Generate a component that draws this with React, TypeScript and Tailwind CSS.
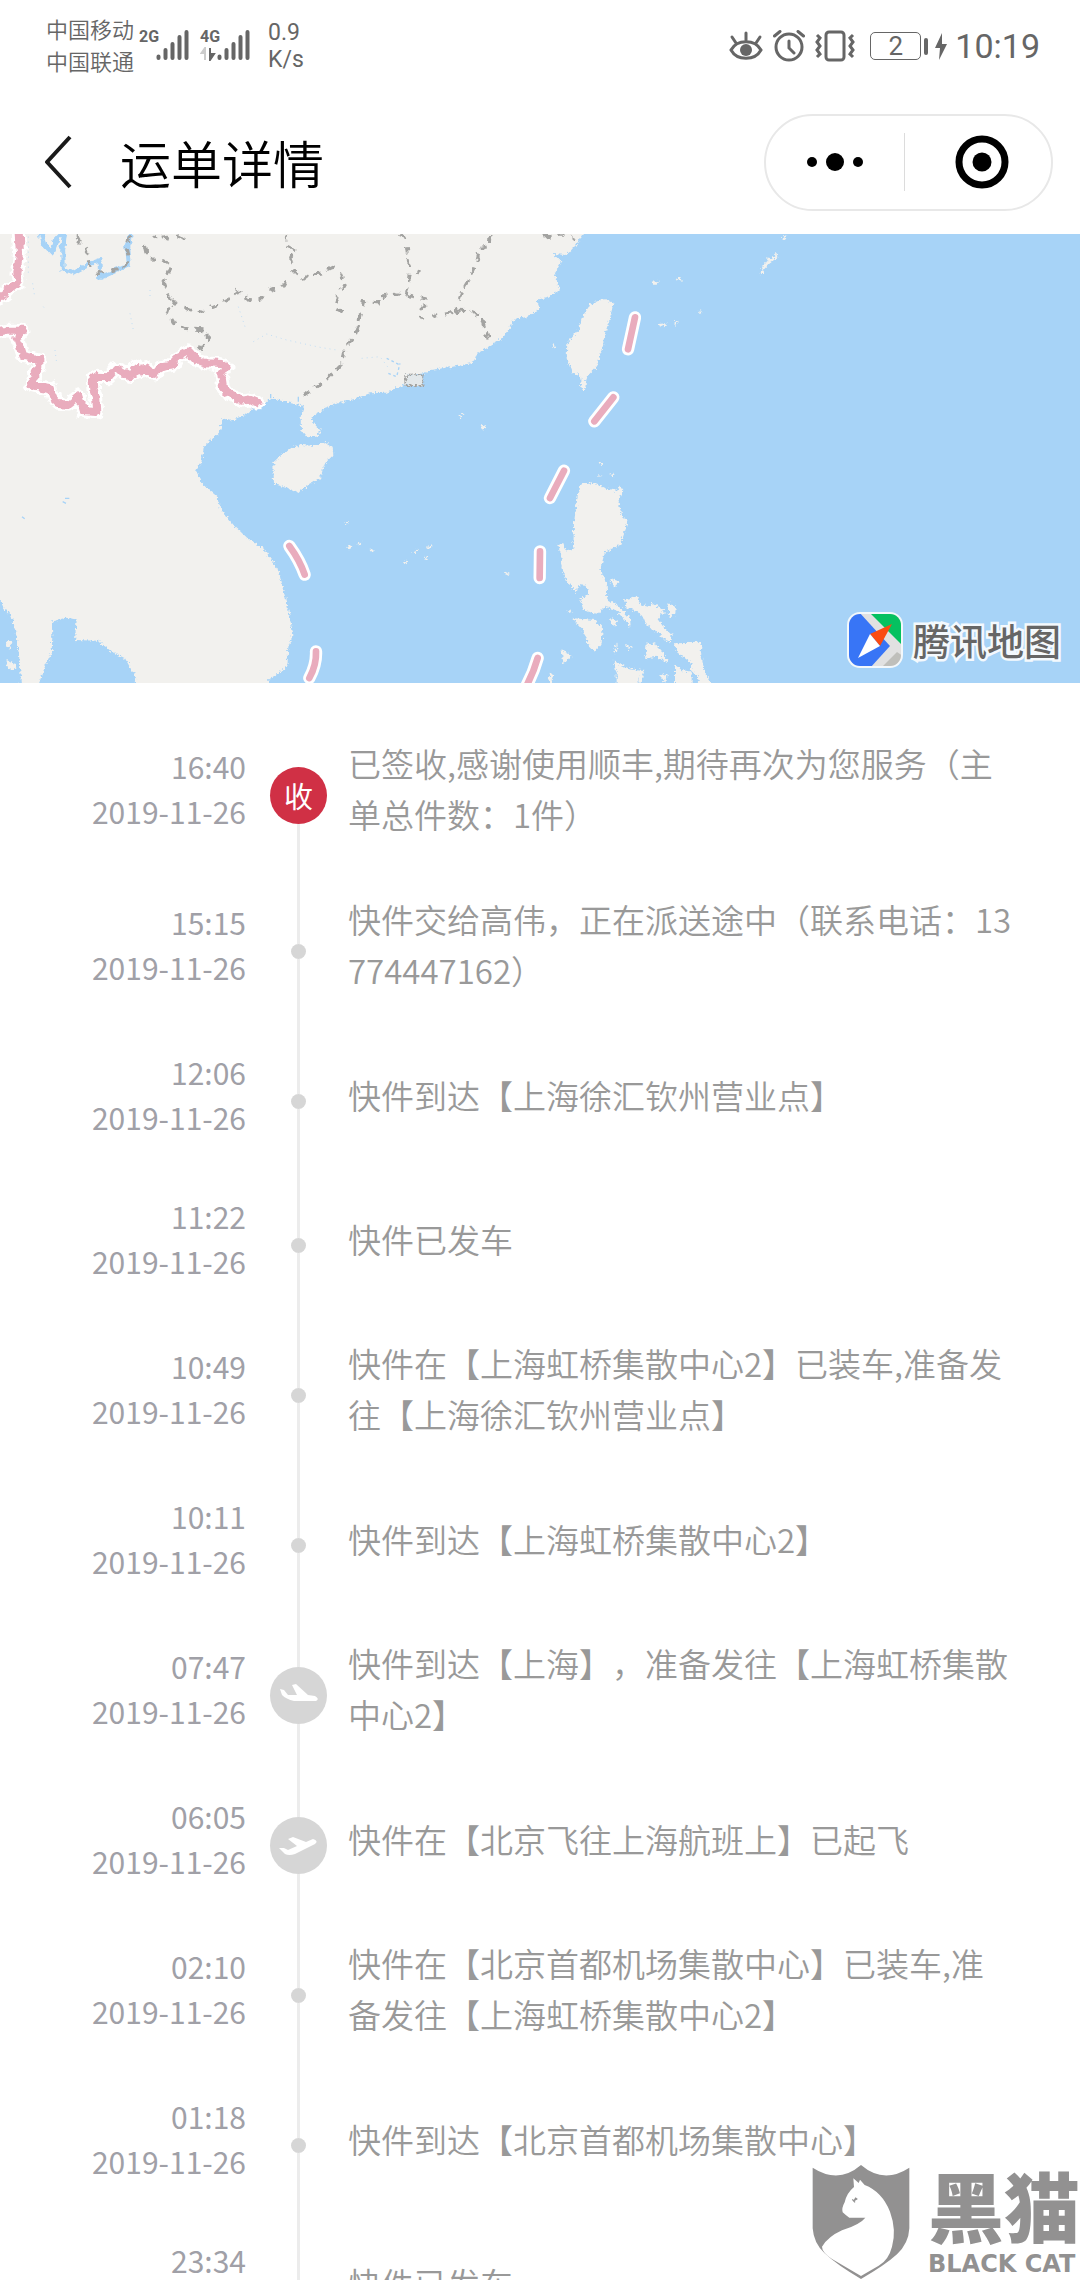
import { Fragment } from "react";

type Marker = "dot" | "signed" | "landing" | "takeoff";

interface TrackEvent {
  time: string;
  date: string;
  text: string;
  marker?: Marker;
}

const events: TrackEvent[] = [
  { time: "16:40", date: "2019-11-26", text: "已签收,感谢使用顺丰,期待再次为您服务（主单总件数：1件）", marker: "signed" },
  { time: "15:15", date: "2019-11-26", text: "快件交给高伟，正在派送途中（联系电话：13774447162）" },
  { time: "12:06", date: "2019-11-26", text: "快件到达【上海徐汇钦州营业点】" },
  { time: "11:22", date: "2019-11-26", text: "快件已发车" },
  { time: "10:49", date: "2019-11-26", text: "快件在【上海虹桥集散中心2】已装车,准备发往【上海徐汇钦州营业点】" },
  { time: "10:11", date: "2019-11-26", text: "快件到达【上海虹桥集散中心2】" },
  { time: "07:47", date: "2019-11-26", text: "快件到达【上海】，准备发往【上海虹桥集散中心2】", marker: "landing" },
  { time: "06:05", date: "2019-11-26", text: "快件在【北京飞往上海航班上】已起飞", marker: "takeoff" },
  { time: "02:10", date: "2019-11-26", text: "快件在【北京首都机场集散中心】已装车,准备发往【上海虹桥集散中心2】" },
  { time: "01:18", date: "2019-11-26", text: "快件到达【北京首都机场集散中心】" },
  { time: "23:34", date: "2019-11-25", text: "快件已发车" },
];

function SignalBars() {
  return (
    <svg width="34" height="32" viewBox="0 0 34 32" stroke="#666" strokeWidth="4" strokeLinecap="round">
      <path d="M2.5 27.5V29M9.5 21V29M16.5 15V29M23.5 8V29M30.5 3V29" />
    </svg>
  );
}

function StatusBar() {
  return (
    <div className="flex h-[92px] items-start justify-between pr-10 pl-[46px] text-[#666]">
      <div className="flex">
        <div className="pt-3 text-[22px] leading-[32px] font-[350]">
          <p>中国移动</p>
          <p>中国联通</p>
        </div>
        <div className="flex pt-[29px] pl-[5px] font-['Liberation_Sans_Narrow','Roboto',sans-serif] text-[16px] leading-[16px] font-bold">
          <span className="w-[17px]">2G</span>
          <SignalBars />
          <span className="ml-[10px] flex w-[17px] flex-col">
            4G
            <svg width="17" height="14" viewBox="0 0 17 14" className="mt-[2px]">
              <path d="M5 1v12M5 1L1.500 6H5z" fill="#ccc" stroke="#ccc" strokeWidth="2" />
              <path d="M10 1v12M10 13l4-6h-4z" fill="#666" stroke="#666" strokeWidth="2" />
            </svg>
          </span>
          <SignalBars />
        </div>
        <div className="pt-[19px] pl-[17px] font-['Roboto',sans-serif] text-[23px] leading-[27px]">
          <p>0.9</p>
          <p>K/s</p>
        </div>
      </div>

      <div className="flex h-[92px] items-center">
        <svg width="34" height="32" viewBox="0 0 34 32" fill="none" stroke="#666" strokeWidth="3" strokeLinecap="round">
          <path d="M2 20C8 9 26 9 32 20C26 31 8 31 2 20Z" />
          <path d="M17 3v7M3 7l4 6M31 7l-4 6" />
          <circle cx="17" cy="20" r="6" fill="#666" stroke="none" />
        </svg>
        <svg width="32" height="32" viewBox="0 0 32 32" fill="none" stroke="#666" strokeWidth="3" strokeLinecap="round" className="ml-[10px]">
          <circle cx="16" cy="17" r="13" />
          <path d="M16 11v7l5 5M1.500 6L7 1.500M30.500 6L25 1.500" />
        </svg>
        <svg width="40" height="32" viewBox="0 0 40 32" fill="none" stroke="#666" strokeWidth="3" className="ml-[10px]">
          <rect x="11" y="2" width="18" height="28" rx="3" />
          <path d="M2 5l3 3-3 4 3 4-3 4 3 4-3 3M38 5l-3 3 3 4-3 4 3 4-3 4 3 3" />
        </svg>
        <div className="ml-[15px] flex h-[28px] w-[51px] items-center justify-center rounded-[5px] border border-[#666] font-['Roboto',sans-serif] text-[26px] leading-none">
          2
        </div>
        <div className="ml-[3px] h-[17px] w-1 rounded-sm bg-[#666]" />
        <svg width="12" height="27" viewBox="0 0 12 27" fill="#666" className="ml-[7px]">
          <path d="M7 0L0 15h5L4 27l8-16H7z" />
        </svg>
        <span className="ml-[8px] font-['Roboto',sans-serif] text-[34px] leading-none">10:19</span>
      </div>
    </div>
  );
}

function NavBar() {
  return (
    <header className="flex h-[142px] items-center justify-between pr-[27px] pb-[2px] pl-[45px]">
      <div className="flex items-center">
        <button aria-label="返回" className="py-2 pr-[48px]">
          <svg width="27" height="54" viewBox="0 0 27 54" fill="none" stroke="#1a1a1a" strokeWidth="4">
            <path d="M25 2L2 27l23 25" strokeLinejoin="round" />
          </svg>
        </button>
        <h1 className="text-[51px] leading-[76px] font-[350] text-black">运单详情</h1>
      </div>
      <div className="flex h-[97px] w-[289px] items-center rounded-full border-2 border-[#e8e8e8]">
        <button aria-label="更多" className="flex flex-1 justify-center">
          <svg width="58" height="20" viewBox="0 0 58 20">
            <circle cx="6" cy="10" r="5" />
            <circle cx="29" cy="10" r="9" />
            <circle cx="52" cy="10" r="5" />
          </svg>
        </button>
        <div className="h-[58px] w-px bg-[#dcdcdc]" />
        <button aria-label="关闭" className="flex flex-1 justify-center pl-2">
          <svg width="54" height="54" viewBox="0 0 54 54">
            <circle cx="27" cy="27" r="23" fill="none" stroke="#000" strokeWidth="7" />
            <circle cx="27" cy="27" r="9.500" />
          </svg>
        </button>
      </div>
    </header>
  );
}

const landBorders = [
  "M-30 312L20 302L68 302L52 322L70 378L118 388L118 412L104 425L106 440L94 466L152 474L162 508L176 522L205 524L238 498L252 544L292 546L290 520L288 500L280 480L278 450L290 440L328 442L348 416L366 424L390 438L412 412L424 424L436 414L462 434L480 412L518 406L528 384L566 364L590 390L620 400L664 402L680 412L664 436L670 478L698 496L728 512L748 508L772 518",
  "M54 -20L60 70L52 130L56 156L18 186L-30 225",
];

const seaDashes = [
  "M868 948Q900 992 914 1034",
  "M948 1264Q950 1304 928 1344",
  "M1905 262L1884 358",
  "M1840 502L1783 574",
  "M1692 722L1650 804",
  "M1620 964L1619 1044",
  "M1613 1284Q1600 1330 1578 1370",
];

const provinceLines = [
  "M230 20L265 75L270 105L290 128L360 118L388 95L376 40L400 12",
  "M550 20L520 28L500 22L470 28L460 15",
  "M436 48L445 88L485 86L515 105L492 155L504 188L516 215L502 250L520 280L552 295L615 300L628 335L590 362",
  "M516 215L545 232L600 248L655 224L690 205L712 182L742 205L778 208L800 185L850 165L858 155",
  "M855 12L858 45L885 60L872 85L882 125L905 150L930 132L960 130L995 112L1020 125L1035 158L1012 200L1003 232L1045 254",
  "M1078 250L1078 280L1064 320L1036 350L1028 400L980 450L920 490L895 505",
  "M1080 270L1090 215L1130 218L1150 220L1150 198L1185 190L1215 196L1250 202L1285 208L1255 245L1265 268L1310 255L1350 250L1365 240L1410 242L1445 258L1457 300L1470 345",
  "M1200 12L1218 40L1224 90L1232 120L1226 160L1218 195",
  "M1258 120L1255 135",
  "M1470 12L1467 50L1440 55L1428 105L1408 145L1388 180L1375 215L1365 255",
  "M1630 18L1690 12L1725 30",
];

function PinkLine({ d, width }: { d: string; width: number }) {
  return (
    <Fragment>
      <path d={d} stroke="#fff" strokeWidth={width + 17} />
      <path d={d} stroke="#e9acbd" strokeWidth={width} />
    </Fragment>
  );
}

// drawn at three units to the pixel
function RouteMap() {
  return (
    <section className="relative bg-[#a7d3f7]">
      <svg viewBox="0 12 3240 1347" className="block w-full" role="img" aria-label="地图">
        <defs>
          <filter id="coast" x="-5%" y="-5%" width="110%" height="110%" colorInterpolationFilters="sRGB">
            <feTurbulence type="fractalNoise" baseFrequency="0.12" numOctaves="3" seed="4" />
            <feDisplacementMap in="SourceGraphic" scale="18" xChannelSelector="R" yChannelSelector="G" />
          </filter>
          <filter id="wobble" x="-5%" y="-5%" width="110%" height="110%" colorInterpolationFilters="sRGB">
            <feTurbulence type="fractalNoise" baseFrequency="0.05" numOctaves="2" seed="9" />
            <feDisplacementMap in="SourceGraphic" scale="22" xChannelSelector="R" yChannelSelector="G" />
          </filter>
        </defs>
        <g fill="#f2f1ee" filter="url(#coast)">
          <path d="M-60 -30H1760L1745 20L1725 48L1700 75L1660 72L1684 95L1665 130L1678 180L1640 205L1612 208L1618 236L1580 262L1545 266L1525 300L1500 330L1465 350L1430 372L1420 398L1350 412L1290 420L1280 430L1215 435L1240 445L1210 466L1160 488L1110 490L1060 508L985 528L960 545L940 556L935 572L962 602L950 620L920 622L903 600L902 560L912 528L870 518L815 505L790 520L760 535L735 555L690 572L668 565L660 605L612 650L603 700L588 722L610 765L652 800L660 835L705 890L740 922L790 955L836 1020L850 1080L865 1140L880 1215L865 1250L862 1310L805 1350V1420H425L400 1330L375 1285L335 1265L295 1232L225 1230L230 1168L200 1163L155 1175L157 1215L155 1270L130 1320L118 1358V1420H65L60 1300L50 1220L35 1160L10 1130L-20 1080H-60Z" />
          <path d="M820 700L865 658L905 645L945 648L975 635L998 650L1000 675L975 700L960 745L925 765L895 788L865 775L822 762Z" />
          <path d="M22 1228L36 1240L28 1256L18 1246ZM20 1290L40 1300L50 1315L34 1320L20 1312Z" />
          <g transform="translate(810)">
            <path d="M960 225L1000 205L1030 220L1020 265L1005 310L998 350L980 410L950 440L945 482L935 478L930 440L905 425L890 385L892 340L925 300L940 255Z" />
            <path d="M928 765L965 757L1005 775L1040 782L1050 766L1060 780L1045 810L1052 845L1072 880L1050 945L1005 965L990 1020L1010 1060L1012 1110L1050 1130L1080 1165L1082 1190L1060 1165L1035 1138L1005 1130L985 1152L940 1142L930 1110L955 1090L950 1068L925 1065L920 1090L895 1060L880 1025L873 975L865 945L880 940L890 965L910 955L912 880L918 830Z" />
            <path d="M908 1165L975 1170L998 1195L995 1240L975 1265L955 1245L940 1200Z" />
            <path d="M1065 1108L1100 1100L1115 1125L1170 1140L1195 1150L1155 1152L1185 1195L1205 1215L1200 1240L1180 1215L1145 1200L1125 1165L1095 1140L1070 1135Z" />
            <path d="M1130 1240L1175 1260L1195 1300L1160 1270L1125 1285Z" />
            <path d="M1030 1292L1075 1315L1120 1320L1105 1345V1420H1040V1330Z" />
            <path d="M1020 1045L1050 1055L1030 1072ZM1040 1240L1038 1270L1030 1265ZM1022 1165L1045 1172L1035 1187L1020 1180ZM1068 1245L1088 1250L1075 1258ZM875 1260L908 1278L880 1302ZM840 1330L850 1335L842 1358L835 1350Z" />
            <path d="M1145 155L1170 152L1160 164L1148 164ZM1160 283L1190 280L1180 292ZM1210 280L1225 270L1218 288ZM985 695L1000 698L992 706ZM1020 735L1035 728L1028 745ZM975 735L995 737L985 741ZM705 1025L720 1032L708 1038ZM630 585L648 588L640 602ZM565 555L580 552L575 570ZM848 342L858 348L850 354Z" />
            <path d="M230 950L250 944L240 958ZM262 940L274 938L270 946ZM296 960L316 958L308 968ZM225 876H236V884ZM425 965L445 958L440 966ZM470 950L490 946L480 956ZM402 996L412 990L408 1004ZM464 980L474 985L466 992ZM888 1138L906 1145L895 1150Z" />
          </g>
          <g transform="translate(1920)">
            <path d="M360 128L368 105L385 95L378 82L395 85L410 68L412 82L390 100L375 115L368 135ZM425 20L442 16L432 30ZM108 150L122 142L132 152ZM175 240L188 246L180 252Z" />
            <path d="M85 1120L108 1130L105 1155L88 1160ZM100 1240L185 1238L182 1265L195 1330L212 1356V1400H160L178 1345L150 1315L155 1300L115 1270ZM20 1245L45 1240L70 1270L85 1298L50 1280L20 1285ZM105 1305L125 1320L155 1325L155 1400H105ZM0 1320L12 1325L5 1355H-5ZM60 1340L80 1330L76 1360Z" />
            <path d="M40 1120L70 1140L50 1170L62 1205L88 1212L84 1238L55 1210L20 1185L5 1150L20 1135Z" />
          </g>
        </g>
        <g fill="none" stroke="#a7d3f7" strokeLinejoin="round">
          <path filter="url(#wobble)" d="M120 0L135 45L155 65L175 20L195 0L188 60L190 120L220 128L262 105L300 92L302 142L345 122L385 105L380 50L395 12" strokeWidth="15" />
          <path d="M195 805H208M188 815L198 820M66 860L74 866M812 492V505M895 500V515" strokeWidth="4" />
          <path d="M85 20V130M98 160L104 200M130 230L138 240M165 360L170 400M450 180V210M715 230L735 290M760 335L800 312L860 330L960 352L1010 360M1085 385L1140 380L1170 420M390 250L400 300" strokeWidth="2" strokeDasharray="3 12" />
          <path d="M1160 385L1200 405M1165 430L1190 440L1200 400" strokeWidth="4" strokeDasharray="8 8" />
        </g>
        <g fill="none" stroke="#a3a3a1" strokeWidth="9" strokeDasharray="22 20" filter="url(#wobble)">
          {provinceLines.map((d) => (
            <path key={d} d={d} />
          ))}
        </g>
        <path d="M1216 440Q1245 425 1270 440V468H1216Z" fill="#e3e8ea" stroke="#a3a3a1" strokeWidth="6" strokeDasharray="8 5" filter="url(#coast)" />
        <g fill="none" strokeLinecap="round" strokeLinejoin="round">
          <g filter="url(#wobble)">
            {landBorders.map((d) => (
              <PinkLine key={d} d={d} width={24} />
            ))}
          </g>
          {seaDashes.map((d) => (
            <PinkLine key={d} d={d} width={20} />
          ))}
        </g>
      </svg>

      <div className="absolute right-[19px] bottom-[15px] flex items-center gap-[10px]">
        <svg width="56" height="56" viewBox="0 0 56 56">
          <clipPath id="tile">
            <rect x="2" y="2" width="52" height="52" rx="11" />
          </clipPath>
          <rect width="56" height="56" rx="13" fill="#f3f8fb" />
          <g clipPath="url(#tile)">
            <path d="M0 0H56V56H0Z" fill="#e1e1e1" />
            <path d="M0 0H12L43 34L23 56H0Z" fill="#3875f6" />
            <path d="M22 0H56V34Z" fill="#05c160" />
            <path d="M34 56L50 40L56 44V56Z" fill="#bfbfbb" />
            <path d="M45 12L23 22L33 34Z" fill="#fa4b12" />
            <path d="M23 22L11 46L33 34Z" fill="#fff" />
          </g>
        </svg>
        <span className="text-[37px] leading-[54px] font-medium text-[#666] [paint-order:stroke] [-webkit-text-stroke:5px_#f4f9fd]">腾讯地图</span>
      </div>
    </section>
  );
}

function EventMarker({ marker = "dot" }: { marker?: Marker }) {
  if (marker === "dot") return <span className="size-[15px] rounded-full bg-[#d6d6d6]" />;
  if (marker === "signed") {
    return (
      <span className="flex size-[57px] items-center justify-center rounded-full bg-[#d03045] text-[29px] leading-none text-white">
        收
      </span>
    );
  }
  return (
    <span className="flex size-[57px] items-center justify-center rounded-full bg-[#d6d6d6]">
      <svg width="57" height="57" viewBox="0 0 57 57" fill="#fff">
        {marker === "landing" ? (
          <path d="M10 22L14 23L18 28L27 28L22 18L26 17L38 28L45 29Q50 32 46 34H24Q16 32 12 28Z" />
        ) : (
          <path d="M9 31L14 31L18 33L27 29L18 22L23 20L36 25L43 22Q49 24 45 27L25 37Q19 39 15 37Z" />
        )}
      </svg>
    </span>
  );
}

function Timeline() {
  return (
    <ol className="min-h-0 flex-1 overflow-y-auto pt-[34px] [scrollbar-width:none]">
      {events.map((event, i) => (
        <li key={event.time} className="flex items-center pr-[66px]">
          <div className="w-[246px] shrink-0 pt-[21px] pb-[33px] text-right text-[30px] leading-[45px] text-[#a0a0a7]">
            <p>{event.time}</p>
            <p>{event.date}</p>
          </div>
          <div className="mr-[21px] ml-6 flex w-[57px] shrink-0 flex-col items-center self-stretch">
            <span className={i === 0 ? "flex-1" : "w-[3px] flex-1 bg-[#ececec]"} />
            <EventMarker marker={event.marker} />
            <span className="w-[3px] flex-1 bg-[#ececec]" />
          </div>
          <p className="flex-1 pt-[21px] pb-[33px] text-[33px] leading-[51px] font-[350] break-all text-[#999] [text-spacing-trim:space-all]">
            {event.text}
          </p>
        </li>
      ))}
    </ol>
  );
}

function Watermark() {
  return (
    <div className="absolute right-0 bottom-0 flex items-end gap-[18px] text-[#929191]">
      <svg width="98" height="115" viewBox="0 0 294 345">
        <path d="M2 8Q80 58 147 0Q215 58 292 8V190Q290 235 255 268Q220 300 147 342Q75 300 38 265Q5 235 2 190Z" fill="#929191" />
        <path d="M124 40L140 54L144 44L158 60Q210 80 234 140Q254 195 240 245Q230 285 200 302L147 333L60 282Q30 262 30 245Q48 215 90 196Q145 178 160 158H112Q100 150 92 142Q88 130 98 112Q104 84 126 66Z" fill="#fff" />
        <path d="M121 103L129 112M132 98L127 106L136 101" stroke="#929191" strokeWidth="4" fill="none" />
      </svg>
      <div className="flex flex-col gap-[6px]">
        <span className="text-[76px] leading-[76px] font-black">黑猫</span>
        <span className="font-['DejaVu_Sans',sans-serif] text-[24px] leading-[32px] font-bold">BLACK CAT</span>
      </div>
    </div>
  );
}

export default function App() {
  return (
    <div className="relative flex h-screen flex-col overflow-hidden bg-white font-['Noto_Sans_CJK_SC',sans-serif]">
      <StatusBar />
      <NavBar />
      <RouteMap />
      <Timeline />
      <Watermark />
    </div>
  );
}
